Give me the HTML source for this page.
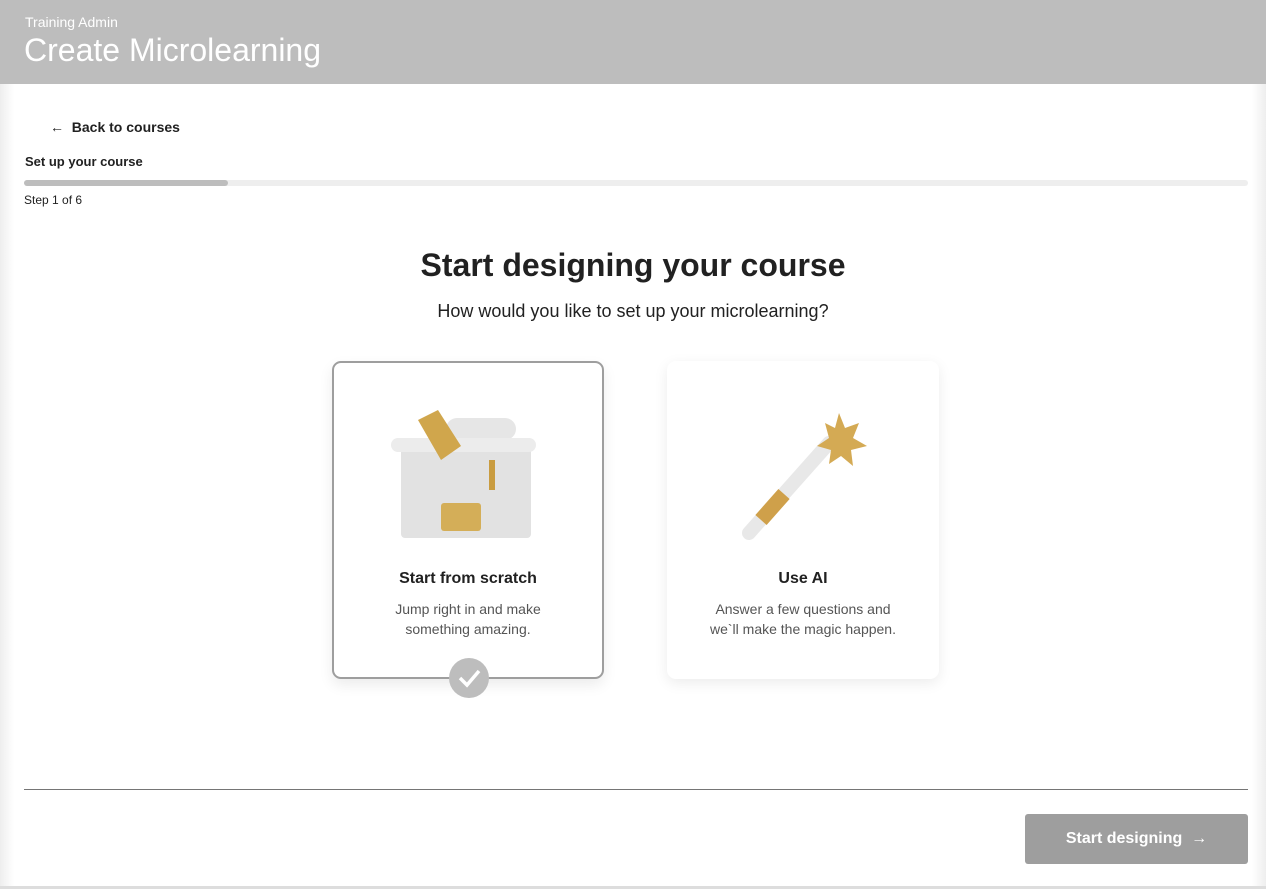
<!DOCTYPE html>
<html><head><style>
body{margin:0;width:1266px;height:889px;background:#fff;font-family:"Liberation Sans",Arial,sans-serif;position:relative;overflow:hidden;color:#212121}
.hdr{position:absolute;left:0;top:0;width:1266px;height:84px;background:#bdbdbd;color:#fff}
.hdr .s{position:absolute;left:25px;top:14px;font-size:14px}
.hdr .t{position:absolute;left:24px;top:32px;font-size:32px}
.edge{position:absolute;top:84px;bottom:0;width:14px}
.l{left:0;background:linear-gradient(90deg,#eee,#fff)}
.r{right:0;background:linear-gradient(270deg,#eee,#fff)}
.abs{position:absolute}
.card{position:absolute;top:361px;width:272px;height:318px;background:#fff;border-radius:9px;text-align:center;box-sizing:border-box;border:2px solid transparent}
.card h3{position:absolute;top:207px;left:0;right:0;margin:0;font-size:16px}
.card p{position:absolute;top:236px;left:0;right:0;margin:0;font-size:14px;line-height:20px;color:#555}
</style></head><body>
<div class="hdr"><div class="s">Training Admin</div><div class="t">Create Microlearning</div></div>
<div class="edge l"></div><div class="edge r"></div>
<div class="abs" style="left:50px;top:119px;font-size:14px;font-weight:bold">&#8592;&nbsp; Back to courses</div>
<div class="abs" style="left:25px;top:154px;font-size:13px;font-weight:bold">Set up your course</div>
<div class="abs" style="left:24px;top:180px;width:1224px;height:6px;background:#eee;border-radius:3px"></div>
<div class="abs" style="left:24px;top:180px;width:204px;height:6px;background:#bdbdbd;border-radius:3px"></div>
<div class="abs" style="left:24px;top:193px;font-size:12px">Step 1 of 6</div>
<div class="abs" style="left:0;width:1266px;top:247px;text-align:center;font-size:32px;font-weight:bold">Start designing your course</div>
<div class="abs" style="left:0;width:1266px;top:301px;text-align:center;font-size:18px">How would you like to set up your microlearning?</div>
<div class="card" style="left:332px;border-color:#9e9e9e;box-shadow:0 6px 14px rgba(0,0,0,.08)">
<svg class="abs" style="left:52px;top:45px" width="150" height="135"><rect x="60" y="10" width="70" height="22" rx="11" fill="#e6e6e6"/><rect x="15" y="40" width="130" height="90" rx="4" fill="#e2e2e2"/><rect x="5" y="30" width="145" height="14" rx="7" fill="#ececec"/><rect x="55" y="95" width="40" height="28" rx="3" fill="#d4ae58"/><path d="M32 12 L52 2 L75 38 L55 52 Z" fill="#d0a64c"/><rect x="103" y="52" width="6" height="30" fill="#c99c40"/></svg>
<h3>Start from scratch</h3><p>Jump right in and make<br>something amazing.</p></div>
<div class="abs" style="left:449px;top:658px;width:40px;height:40px;border-radius:50%;background:#bdbdbd"><svg width="40" height="40"><path d="M11 20 L18 27 L30 13" stroke="#fff" stroke-width="3.5" fill="none"/></svg></div>
<div class="card" style="left:667px;box-shadow:0 4px 14px rgba(0,0,0,.08)">
<svg class="abs" style="left:60px;top:45px" width="150" height="135"><path d="M20 125 L100 35" stroke="#e8e8e8" stroke-width="14" stroke-linecap="round"/><path d="M32 112 L55 86" stroke="#cfa04a" stroke-width="15"/><polygon points="110,5 116,20 130,15 124,30 138,38 122,42 124,58 112,48 100,56 102,42 88,38 100,30 96,15 106,20" fill="#d4aa54"/></svg>
<h3>Use AI</h3><p>Answer a few questions and<br>we`ll make the magic happen.</p></div>
<div class="abs" style="left:24px;top:789px;width:1224px;height:1px;background:#757575"></div>
<div class="abs" style="left:1025px;top:814px;width:223px;height:50px;background:#9e9e9e;border-radius:3px;color:#fff;font-weight:bold;font-size:16px;line-height:50px;text-align:center">Start designing &nbsp;&#8594;</div>
<div class="abs" style="left:0;top:886px;width:1266px;height:3px;background:#ddd"></div>
</body></html>
